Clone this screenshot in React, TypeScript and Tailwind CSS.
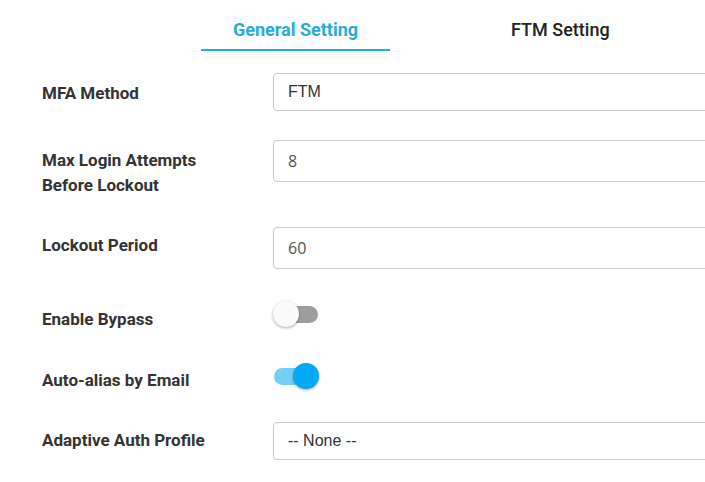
import React from "react";

function Toggle({ on }: { on: boolean }) {
  return (
    <div className="relative h-[26px] w-[46px]">
      <div
        className={
          on
            ? "absolute left-[1px] top-[5px] h-[17px] w-[44px] rounded-full bg-[#74cff8]"
            : "absolute left-[4px] top-[5px] h-[17px] w-[41px] rounded-full bg-[#9e9e9e]"
        }
      />
      <div
        className={
          on
            ? "absolute left-[20px] top-0 h-[26px] w-[26px] rounded-full bg-[#03a9f4] shadow-[0_1px_3px_rgba(0,0,0,0.35)]"
            : "absolute left-0 top-0 h-[26px] w-[26px] rounded-full bg-[#fafafa] shadow-[0_1px_3px_rgba(0,0,0,0.35)]"
        }
      />
    </div>
  );
}

const label = "w-[231px] shrink-0 text-[17px] leading-[25px] font-bold text-[#333]";
const field =
  "w-[460px] shrink-0 rounded-[4px] border border-[#cccccc] bg-white pl-[14px] flex items-center";

export default function App() {
  return (
    <div className="w-full overflow-hidden bg-white" style={{ fontFamily: "Roboto, sans-serif" }}>
      {/* tabs */}
      <div className="flex pl-[201px]">
        <div className="w-[189px] border-b-2 border-[#1ab2e4] pt-[17px] pb-[6px] text-center text-[18px] leading-[26px] font-bold text-[#27abde]">
          General Setting
        </div>
        <div className="ml-[121px] pt-[17px] text-[18px] leading-[26px] font-medium text-[#222]">
          FTM Setting
        </div>
      </div>

      <div className="pl-[42px]">
        <div className="mt-[22px] flex items-start">
          <div className={label + " pt-[8px]"}>MFA Method</div>
          <div className={field + " h-[38px]"}>
            <span className="text-[16px] text-[#333]" style={{ fontFamily: '"Liberation Sans", Arial, sans-serif' }}>
              FTM
            </span>
          </div>
        </div>

        <div className="mt-[29px] flex items-start">
          <div className={label + " pt-[8px]"}>
            Max Login Attempts
            <br />
            Before Lockout
          </div>
          <div className={field + " h-[42px]"}>
            <span className="text-[16px] text-[#555]" style={{ fontFamily: '"Open Sans", sans-serif' }}>
              8
            </span>
          </div>
        </div>

        <div className="mt-[29px] flex items-start">
          <div className={label + " pt-[6px]"}>Lockout Period</div>
          <div className={field + " h-[42px]"}>
            <span className="text-[16px] text-[#555]" style={{ fontFamily: '"Open Sans", sans-serif' }}>
              60
            </span>
          </div>
        </div>

        <div className="mt-[32px] flex h-[26px] items-start">
          <div className={label + " pt-[6px]"}>Enable Bypass</div>
          <Toggle on={false} />
        </div>

        <div className="mt-[36px] flex h-[26px] items-start">
          <div className={label + " pt-[5px]"}>Auto-alias by Email</div>
          <Toggle on={true} />
        </div>

        <div className="mt-[33px] flex items-start pb-[22px]">
          <div className={label + " pt-[6px]"}>Adaptive Auth Profile</div>
          <div className={field + " h-[38px]"}>
            <span className="text-[16px] text-[#333]" style={{ fontFamily: '"Liberation Sans", Arial, sans-serif' }}>
              -- None --
            </span>
          </div>
        </div>
      </div>
    </div>
  );
}
